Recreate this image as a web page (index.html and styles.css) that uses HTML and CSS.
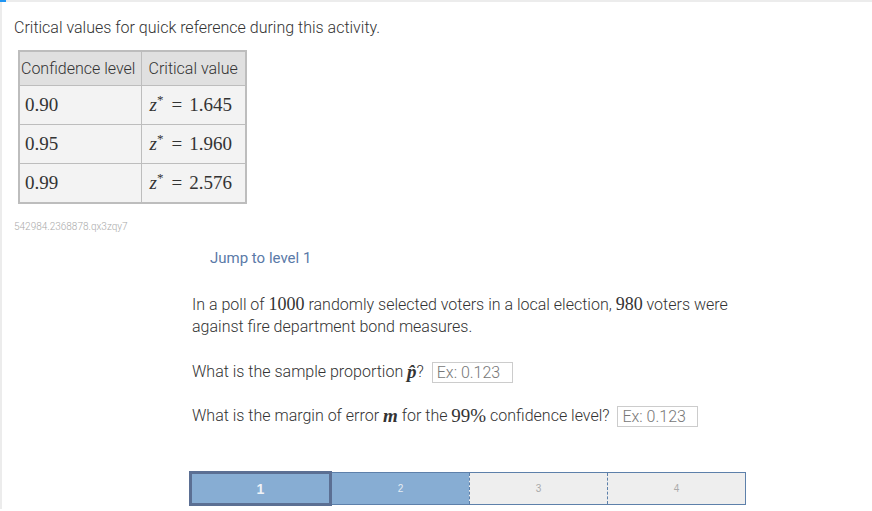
FILE: index.html
```html
<!DOCTYPE html>
<html>
<head>
<meta charset="utf-8">
<link rel="stylesheet" href="styles.css">
</head>
<body>
<div class="page">
  <div class="corner"></div>
  <p class="intro">Critical values for quick reference during this activity.</p>
  <table class="crit">
    <colgroup><col class="w1"><col class="w2"></colgroup>
    <tr><th class="c1">Confidence level</th><th class="c2">Critical value</th></tr>
    <tr><td class="c1 m">0.90</td><td class="c2 m"><i>z</i><sup>*</sup><span class="eq">=</span>1.645</td></tr>
    <tr><td class="c1 m">0.95</td><td class="c2 m"><i>z</i><sup>*</sup><span class="eq">=</span>1.960</td></tr>
    <tr><td class="c1 m">0.99</td><td class="c2 m"><i>z</i><sup>*</sup><span class="eq">=</span>2.576</td></tr>
  </table>
  <div class="code">542984.2368878.qx3zqy7</div>
  <div class="main">
    <div class="jump">Jump to level 1</div>
    <p class="para">In a poll of <span class="m">1000</span> randomly selected voters in a local election, <span class="m">980</span> voters were against fire department bond measures.</p>
    <div class="q q1">What is the sample proportion <span class="m bi">p̂</span>? <input class="ans" placeholder="Ex: 0.123"></div>
    <div class="q q2">What is the margin of error <span class="m bi">m</span> for the <span class="m">99%</span> confidence level? <input class="ans" placeholder="Ex: 0.123"></div>
    <div class="levels">
      <div class="lvl cur">1</div>
      <div class="lvl done">2</div>
      <div class="lvl todo dash">3</div>
      <div class="lvl todo dash">4</div>
    </div>
  </div>
</div>
</body>
</html>
```

FILE: styles.css
```css
html, body { margin: 0; padding: 0; background: #fff; }
body { font-family: Roboto, "Liberation Sans", sans-serif; color: #333; font-weight: 300; }
.page {
  position: relative;
  border-top: 2px solid #ececec;
  border-left: 2px solid #ececec;
  min-height: 509px;
  padding-left: 12px;
  box-sizing: border-box;
}
.corner { position: absolute; top: -2px; left: -2px; width: 6px; height: 2px; background: #2196f3; }
.intro { margin: 16px 0 0; font-size: 16px; line-height: 20px; }
.crit {
  margin: 12px 0 0 4px;
  border-collapse: collapse;
  border: 2px solid #bdbdbd;
  table-layout: fixed;
  width: 227px;
}
.w1 { width: 122px; }
.w2 { width: 105px; }
.crit th {
  background: #e0e0e0;
  font-weight: 300;
  font-size: 16px;
  height: 33px;
  text-align: left;
  border: 1px solid #bdbdbd;
  padding: 0;
  color: #333;
  white-space: nowrap;
}
.crit td {
  background: #f3f3f3;
  height: 38px;
  border: 1px solid #bdbdbd;
  padding: 0;
  white-space: nowrap;
}
.crit th.c1 { padding-left: 1px; }
.crit th.c2 { padding-left: 7px; }
.crit td.c1 { padding-left: 5px; }
.crit td.c2 { padding-left: 8px; }
.m { font-family: "Liberation Serif", serif; font-size: 18px; color: #333; font-weight: 400; }
.crit td.m { font-size: 19px; }
.crit i { font-style: italic; }
.crit sup { font-size: 13px; vertical-align: 7px; line-height: 0; }
.eq { margin: 0 7px 0 8px; }
.code { margin-top: 17px; font-size: 10px; line-height: 12px; color: #aaa; }
.main { margin-left: 176px; width: 556px; }
.jump { margin-top: 16px; padding-left: 20px; font-size: 15px; line-height: 18px; color: #5a7aa8; font-weight: 400; }
.para { margin: 26px 0 0; padding-left: 2px; font-size: 16px; line-height: 22px; }
.para .m { font-size: 18px; }
.q { padding-left: 2px; font-size: 16px; line-height: 22px; display: flex; align-items: center; white-space: pre; }
.q .m { font-size: 19px; }
.bi { font-weight: 700; font-style: italic; }
.q1 { margin-top: 23px; }
.q2 { margin-top: 22px; }
.ans {
  width: 81px; height: 21px; box-sizing: border-box;
  border: 1px solid #ccc; margin-left: 4px; padding: 0 4px;
  font-family: Roboto, sans-serif; font-size: 16px; font-weight: 300; color: #333;
  outline: none;
}
.ans::placeholder { color: #777; }
.levels {
  margin-top: 45px;
  display: flex;
  height: 33px;
  border: 1px solid #5d80aa;
  box-sizing: border-box;
}
.lvl { flex: 1; display: flex; align-items: center; justify-content: center; font-size: 10px; font-family: "Liberation Sans", sans-serif; }
.cur {
  background: #87add3;
  border: 3px solid #5b6f93;
  margin: -2px 0 -2px -2px;
  color: #eef2f7;
  font-size: 14px;
  font-weight: 700;
}
.done { background: #87add3; color: #e4ecf4; }
.todo { background: #eee; color: #aaa; }
.dash { border-left: 1px dashed #5d80aa; }
```
